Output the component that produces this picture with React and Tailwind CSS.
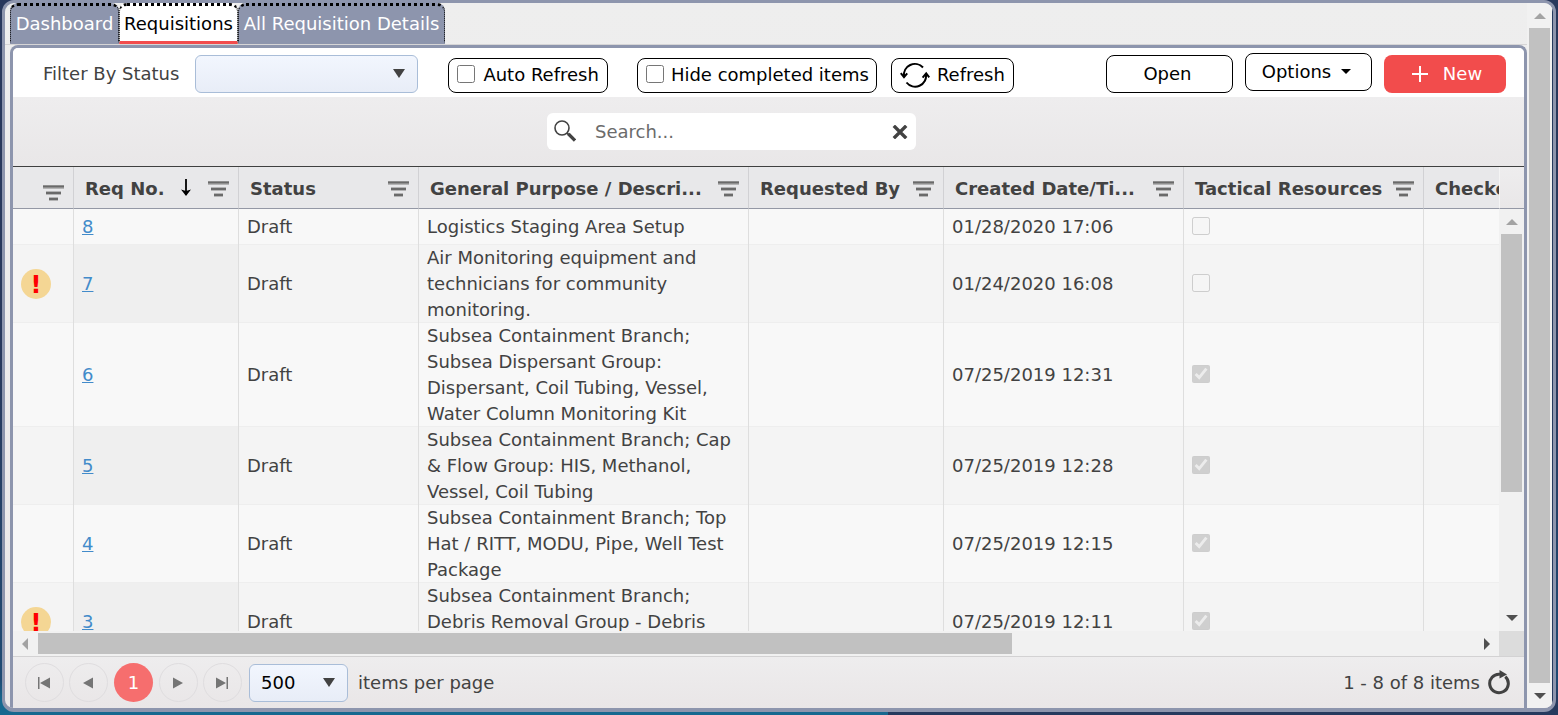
import React, { useState } from "react"

const tabs = [
    { title: "Dashboard", width: "w-[109px]" },
    { title: "Requisitions", width: "w-[119px]" },
    { title: "All Requisition Details", width: "w-[207px]" },
]

const columns = [
    { key: "no", title: "Req No.", width: "w-[165px]", sorted: true },
    { key: "status", title: "Status", width: "w-[180px]" },
    { key: "purpose", title: "General Purpose / Descri...", width: "w-[330px]" },
    { key: "requestedBy", title: "Requested By", width: "w-[195px]" },
    { key: "created", title: "Created Date/Ti...", width: "w-[240px]" },
    { key: "tactical", title: "Tactical Resources", width: "w-[240px]" },
    { key: "checked", title: "Checked By", width: "w-[240px]" },
]

const requisitions = [
    { no: 8, purpose: ["Logistics Staging Area Setup"], created: "01/28/2020 17:06", tactical: false },
    {
        no: 7,
        alert: true,
        purpose: ["Air Monitoring equipment and", "technicians for community", "monitoring."],
        created: "01/24/2020 16:08",
        tactical: false,
    },
    {
        no: 6,
        purpose: [
            "Subsea Containment Branch;",
            "Subsea Dispersant Group:",
            "Dispersant, Coil Tubing, Vessel,",
            "Water Column Monitoring Kit",
        ],
        created: "07/25/2019 12:31",
        tactical: true,
    },
    {
        no: 5,
        purpose: ["Subsea Containment Branch; Cap", "& Flow Group: HIS, Methanol,", "Vessel, Coil Tubing"],
        created: "07/25/2019 12:28",
        tactical: true,
    },
    {
        no: 4,
        purpose: ["Subsea Containment Branch; Top", "Hat / RITT, MODU, Pipe, Well Test", "Package"],
        created: "07/25/2019 12:15",
        tactical: true,
    },
    {
        no: 3,
        alert: true,
        purpose: ["Subsea Containment Branch;", "Debris Removal Group - Debris", "Removal"],
        created: "07/25/2019 12:11",
        tactical: true,
    },
]

function FilterIcon() {
    return (
        <svg width="21" height="16" viewBox="0 0 21 16" aria-hidden="true">
            <g fill="#b4b4b5">
                <rect x="0" y="0" width="21" height="4" />
                <rect x="3" y="6" width="15" height="4" />
                <rect x="6" y="12" width="9" height="4" />
            </g>
            <g fill="#6a6a6a">
                <rect x="0" y="0.5" width="21" height="2" />
                <rect x="3" y="7" width="15" height="2" />
                <rect x="6" y="13" width="9" height="2" />
            </g>
        </svg>
    )
}

function Triangle({ dir, className }) {
    const points = {
        up: "0,6 6,0 12,6",
        down: "0,0 12,0 6,6",
        left: "6,0 6,12 0,6",
        right: "0,0 6,6 0,12",
    }
    const flat = dir === "up" || dir === "down"
    return (
        <svg width={flat ? 12 : 6} height={flat ? 6 : 12} className={className} aria-hidden="true">
            <polygon points={points[dir]} fill="currentColor" />
        </svg>
    )
}

function SelectArrow() {
    return (
        <svg width="12" height="9" viewBox="0 0 12 9" className="pointer-events-none absolute right-[13px] top-[14px] text-[#424242]" aria-hidden="true">
            <polygon points="0,0 12,0 6,9" fill="currentColor" />
        </svg>
    )
}

function PagerButton({ label, children }) {
    return (
        <button
            type="button"
            aria-label={label}
            className="flex size-[39px] items-center justify-center rounded-full border border-[#dfdddf] pr-0.5 text-[#757575] cursor-pointer"
        >
            {children}
        </button>
    )
}

function Tabs({ active, onChange }) {
    return (
        <div role="tablist" className="flex h-[42px] border-b border-[#d6d5d6] pl-[5px]">
            {tabs.map(({ title, width }) => (
                <button
                    key={title}
                    type="button"
                    role="tab"
                    aria-selected={title === active}
                    onClick={() => onChange(title)}
                    className={`${width} h-[41px] rounded-t-lg border-x border-t-[3px] border-b-[3px] border-dotted border-black [border-bottom-style:solid] whitespace-nowrap ${
                        title === active ? "border-b-[#f24c4c] bg-white text-black" : "border-b-[#8d95ad] bg-[#8d95ad] text-white"
                    }`}
                >
                    {title}
                </button>
            ))}
        </div>
    )
}

function Toolbar() {
    return (
        <div className="flex h-[49px] items-center bg-white pl-[30px] pr-[18px] pt-0.5 text-black">
            <label htmlFor="status" className="text-[#424242]">
                Filter By Status
            </label>
            <div className="relative ml-4">
                <select
                    id="status"
                    className="block h-[38px] w-[223px] appearance-none rounded-md border border-[#a9bdd8] bg-linear-to-b from-[#f2f6fe] to-[#e8edf7] px-3"
                >
                    <option></option>
                    <option>Draft</option>
                </select>
                <SelectArrow />
            </div>
            <label className="ml-[30px] mt-[3px] flex h-[35px] items-center gap-2 rounded-lg border border-black px-2">
                <input type="checkbox" className="-mt-0.5 size-[18px]" />
                Auto Refresh
            </label>
            <label className="ml-[29px] mt-[3px] flex h-[35px] items-center gap-[7px] rounded-lg border border-black pl-2 pr-[7px]">
                <input type="checkbox" className="-mt-0.5 size-[18px]" />
                Hide completed items
            </label>
            <button type="button" className="ml-[14px] mt-[3px] flex h-[35px] items-center gap-[7px] rounded-lg border border-black px-2 cursor-pointer">
                <svg width="30" height="28" viewBox="0 0 30 28" fill="none" stroke="#000" strokeWidth="2" aria-hidden="true">
                    <path d="M23 6.5A11 11 0 0 0 4 15.5M0.8 12.2L4 16.2L7.2 12.4" />
                    <path d="M6.5 21.5A11 11 0 0 0 26 13M22.6 16.6L26.2 12.4L29.3 16.4" />
                </svg>
                Refresh
            </button>
            <div className="ml-auto flex items-start gap-3">
                <button type="button" className="h-[38px] w-[127px] rounded-lg border border-black pr-1 cursor-pointer">
                    Open
                </button>
                <button type="button" className="-mt-0.5 flex h-[38px] w-[127px] items-center justify-center gap-[10px] rounded-lg border border-black pr-1 cursor-pointer">
                    Options
                    <svg width="10" height="5" aria-hidden="true">
                        <polygon points="0,0 10,0 5,5" fill="#000" />
                    </svg>
                </button>
                <button type="button" className="flex h-[38px] w-[122px] items-center justify-center gap-[15px] rounded-lg bg-[#f24c4c] pl-1 text-white cursor-pointer">
                    <svg width="16" height="16" stroke="#fff" strokeWidth="2" aria-hidden="true">
                        <path d="M8 0V16M0 8H16" />
                    </svg>
                    New
                </button>
            </div>
        </div>
    )
}

function SearchBar() {
    return (
        <div className="flex h-[69px] items-center justify-center bg-linear-to-b from-[#eeedee] to-[#e9e7e8] pr-[74px]">
            <div className="flex h-[37px] w-[369px] items-center rounded-md bg-white pl-[7px] pr-2">
                <svg width="22" height="22" viewBox="0 0 22 22" fill="none" stroke="#424242" className="-mt-0.5" aria-hidden="true">
                    <circle cx="8" cy="8" r="7" strokeWidth="1.6" />
                    <path d="M13 13L15 15" strokeWidth="2" />
                    <path d="M14.5 14L21 20.5" strokeWidth="3.2" />
                </svg>
                <input
                    type="text"
                    aria-label="Search"
                    placeholder="Search..."
                    className="ml-[19px] min-w-0 flex-1 outline-none placeholder:text-[#6b6b6b]"
                />
                <button type="button" aria-label="Clear" className="cursor-pointer">
                    <svg width="16" height="14" viewBox="0 0 16 14" stroke="#424242" strokeWidth="3.4" aria-hidden="true">
                        <path d="M1.8 0.8L14.2 13.2M14.2 0.8L1.8 13.2" />
                    </svg>
                </button>
            </div>
        </div>
    )
}

function RequisitionTable() {
    const cell = "border-l border-[#dedede] px-2 shadow-[inset_0_-1px_0_#eeeeee]"

    return (
        <table className="w-[1650px] table-fixed border-separate border-spacing-0 leading-[26px]">
            <thead>
                <tr className="h-[42px] bg-[#e8e8ea] text-left">
                    <th className="w-[60px] border-b border-[#9498a5] pr-[9px] pt-[10px]">
                        <div className="flex justify-end">
                            <FilterIcon />
                        </div>
                    </th>
                    {columns.map((col) => (
                        <th key={col.key} className={`${col.width} border-l border-b border-l-[#d1d1d4] border-b-[#9498a5] pl-[11px] pr-[9px] pt-0.5`}>
                            <div className="flex items-center whitespace-nowrap">
                                {col.title}
                                {col.sorted && (
                                    <svg width="10" height="17" viewBox="0 0 10 17" className="-mt-0.5 ml-4" aria-hidden="true">
                                        <path d="M5 0V13" stroke="#000" strokeWidth="1.8" />
                                        <path d="M0 10.5L5 12L10 10.5L5 17Z" fill="#000" />
                                    </svg>
                                )}
                                <span className="ml-auto">
                                    <FilterIcon />
                                </span>
                            </div>
                        </th>
                    ))}
                </tr>
            </thead>
            <tbody>
                {requisitions.map((req, i) => (
                    <tr key={req.no} className={i % 2 ? "h-9 bg-[#f4f4f4]" : "h-9 bg-[#f8f8f8]"}>
                        <td className="pl-2 shadow-[inset_0_-1px_0_#eeeeee]">
                            {req.alert && (
                                <span className="flex size-[30px] items-center justify-center rounded-full bg-[#f4d694] pt-0.5 text-2xl font-bold text-[#ff0000]">
                                    !
                                </span>
                            )}
                        </td>
                        <td className={i % 2 ? `${cell} bg-[#efefef]` : cell}>
                            <a href="#" className="text-[#428bca] underline">
                                {req.no}
                            </a>
                        </td>
                        <td className={cell}>Draft</td>
                        <td className={`${cell} whitespace-nowrap`}>
                            {req.purpose.map((line) => (
                                <div key={line}>{line}</div>
                            ))}
                        </td>
                        <td className={cell}></td>
                        <td className={cell}>{req.created}</td>
                        <td className={`${cell} pb-0.5`}>
                            <input
                                type="checkbox"
                                aria-label={`Tactical resources ${req.no}`}
                                defaultChecked={req.tactical}
                                disabled
                                className="block size-[18px]"
                            />
                        </td>
                        <td className={cell}></td>
                    </tr>
                ))}
            </tbody>
        </table>
    )
}

function Pager() {
    return (
        <div className="flex h-[52px] items-center border-t border-[#d3d2d3] bg-linear-to-b from-[#eeedee] to-[#e9e6e7] pl-3 pr-[13px]">
            <div className="flex gap-[5px]">
                <PagerButton label="First page">
                    <svg width="12" height="12" fill="currentColor" aria-hidden="true">
                        <path d="M0 0H1.5V12H0ZM12 0.5V11.5L2 6Z" />
                    </svg>
                </PagerButton>
                <PagerButton label="Previous page">
                    <svg width="10" height="12" fill="currentColor" aria-hidden="true">
                        <path d="M10 0.5V11.5L0 6Z" />
                    </svg>
                </PagerButton>
                <button type="button" aria-current="page" className="mx-px size-[39px] rounded-full bg-[#f66e6e] text-white cursor-pointer">
                    1
                </button>
                <PagerButton label="Next page">
                    <svg width="10" height="12" fill="currentColor" aria-hidden="true">
                        <path d="M0 0.5V11.5L10 6Z" />
                    </svg>
                </PagerButton>
                <PagerButton label="Last page">
                    <svg width="12" height="12" fill="currentColor" aria-hidden="true">
                        <path d="M10.5 0H12V12H10.5ZM0 0.5V11.5L10 6Z" />
                    </svg>
                </PagerButton>
            </div>
            <div className="relative ml-[7px]">
                <select
                    id="page-size"
                    defaultValue="500"
                    className="block h-[38px] w-[99px] appearance-none rounded-md border border-[#a9bdd8] bg-linear-to-b from-[#f2f6fe] to-[#e8edf7] px-[11px] text-black"
                >
                    <option>100</option>
                    <option>500</option>
                </select>
                <SelectArrow />
            </div>
            <label htmlFor="page-size" className="ml-[10px]">
                items per page
            </label>
            <span className="ml-auto">1 - 8 of 8 items</span>
            <button type="button" aria-label="Reload" className="ml-2 cursor-pointer">
                <svg width="23" height="25" viewBox="0 0 23 25" fill="none" aria-hidden="true">
                    <path d="M17.3 6.6A9.3 9.3 0 1 1 12 4.2" stroke="#424242" strokeWidth="3" />
                    <path d="M11.5 0L19 4.4L11.5 8.5Z" fill="#424242" />
                </svg>
            </button>
        </div>
    )
}

export default function App() {
    const [activeTab, setActiveTab] = useState("Requisitions")

    return (
        <div className="h-screen bg-[linear-gradient(to_right,#17688f_57%,#263a5e_57%)] font-['Verdana','DejaVu_Sans',sans-serif] text-lg leading-[26px] text-[#424242]">
            <div className="h-full bg-[linear-gradient(to_bottom,#28385c_50%,#1f4a73_95%,transparent_98%)] px-[2px] pb-[3px]">
                <div className="flex h-full overflow-hidden rounded-xl border-[3px] border-b-4 border-[#8d95ad] bg-linear-to-b from-[#eeeeee] to-[#ebe8e9]">
                    <div className="flex min-w-0 flex-1 flex-col">
                        <Tabs active={activeTab} onChange={setActiveTab} />

                        {/* Tab content */}
                        <div className="ml-[5px] flex min-h-0 flex-1 flex-col overflow-hidden rounded-t-lg border-x-[3px] border-t-[3px] border-[#8d95ad]">
                            <Toolbar />
                            <SearchBar />

                            {/* Grid */}
                            <div className="flex min-h-0 flex-1 border-t border-[#3f4040] bg-[#f4f4f4]">
                                <div className="min-w-0 flex-1 overflow-hidden">
                                    <RequisitionTable />
                                </div>
                                <div className="flex w-[25px] flex-col bg-[#f1f1f1]">
                                    <div className="h-[42px] shrink-0 border-b border-l border-b-[#9498a5] border-l-[#f4f4f4] bg-linear-to-b from-[#eeedee] to-[#e9e7e8]"></div>
                                    <div className="flex min-h-0 flex-1 flex-col items-center pb-[10px] pt-[10px]">
                                        <Triangle dir="up" className="shrink-0 text-[#a3a3a3]" />
                                        <div className="mt-[9px] h-[258px] w-[21px] bg-[#c1c1c1]"></div>
                                        <Triangle dir="down" className="mt-auto shrink-0 text-[#505050]" />
                                    </div>
                                </div>
                            </div>
                            <div className="flex h-[25px] shrink-0 bg-[#f1f1f1]">
                                <div className="flex min-w-0 flex-1 items-center px-[9px]">
                                    <Triangle dir="left" className="shrink-0 text-[#a3a3a3]" />
                                    <div className="ml-[10px] h-[21px] w-[974px] bg-[#c1c1c1]"></div>
                                    <Triangle dir="right" className="ml-auto shrink-0 text-[#505050]" />
                                </div>
                                <div className="w-[25px] bg-[#dcdcdc]"></div>
                            </div>

                            <Pager />
                        </div>
                    </div>

                    {/* Page scrollbar */}
                    <div className="flex w-[26px] flex-col items-center border-r border-[#263a5e] bg-[#f1f1f1] pb-[9px] pt-[10px]">
                        <Triangle dir="up" className="shrink-0 text-[#a3a3a3]" />
                        <div className="mb-[10px] mt-[9px] w-[21px] flex-1 bg-[#c1c1c1]"></div>
                        <Triangle dir="down" className="shrink-0 text-[#505050]" />
                    </div>
                </div>
            </div>
        </div>
    )
}
